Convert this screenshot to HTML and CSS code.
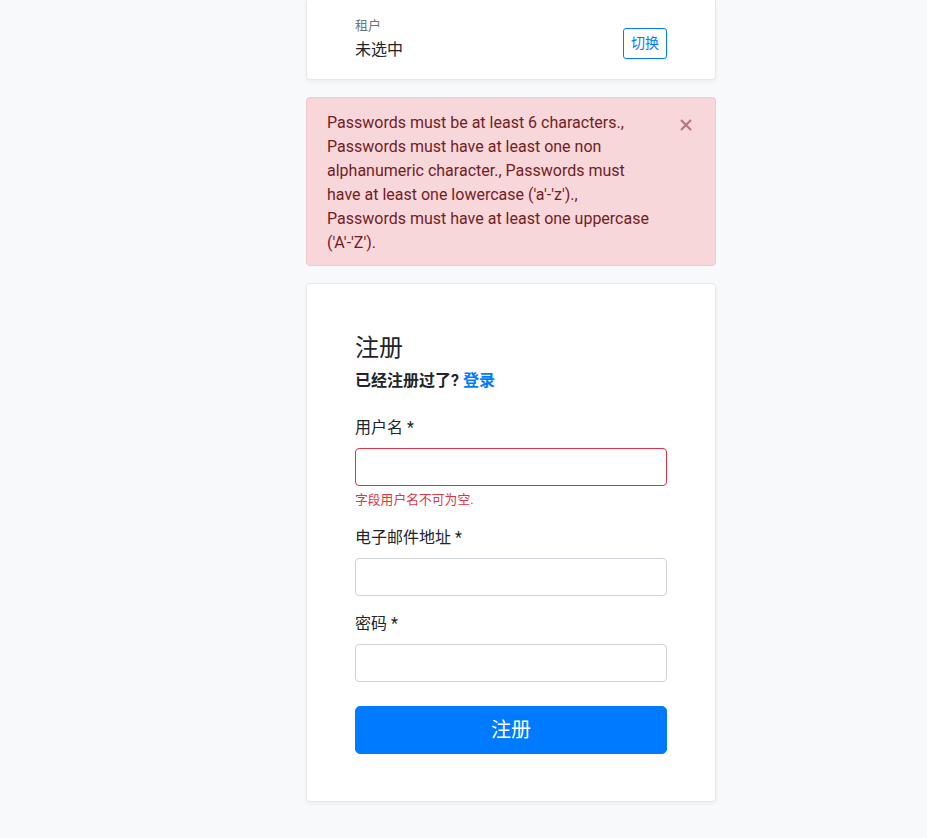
FILE: index.html
```html
<!DOCTYPE html>
<html lang="zh">
<head>
<meta charset="utf-8">
<title>注册</title>
<link rel="stylesheet" href="styles.css">
</head>
<body>
<main class="column">
  <section class="card tenant-card">
    <div class="tenant-info">
      <div class="tenant-label">租户</div>
      <div class="tenant-value">未选中</div>
    </div>
    <button class="btn-outline">切换</button>
  </section>

  <div class="alert">
    <p class="alert-text">Passwords must be at least 6 characters., Passwords must have at least one non alphanumeric character., Passwords must have at least one lowercase ('a'-'z')., Passwords must have at least one uppercase ('A'-'Z').</p>
    <button class="close" aria-label="Close">
      <svg width="12" height="12" viewBox="0 0 12 12"><path d="M1 1L11 11M11 1L1 11" stroke="currentColor" stroke-width="2.2" stroke-linecap="butt"/></svg>
    </button>
  </div>

  <section class="card register-card">
    <h4 class="title">注册</h4>
    <p class="subtitle">已经注册过了? <a href="#" class="link">登录</a></p>
    <form class="form">
      <div class="group">
        <label class="label">用户名 *</label>
        <input class="input invalid" type="text">
        <div class="feedback">字段用户名不可为空.</div>
      </div>
      <div class="group">
        <label class="label">电子邮件地址 *</label>
        <input class="input" type="email">
      </div>
      <div class="group">
        <label class="label">密码 *</label>
        <input class="input" type="password">
      </div>
      <button class="btn-primary" type="button">注册</button>
    </form>
  </section>
</main>
</body>
</html>
```

FILE: styles.css
```css
* { box-sizing: border-box; }
html, body { margin: 0; padding: 0; }
body {
  background: #f8f9fa;
  font-family: "Segoe UI", Roboto, "Noto Sans CJK SC", sans-serif;
  font-size: 16px;
  line-height: 1.5;
  color: #212529;
  height: 838px;
  overflow: hidden;
}
.column {
  width: 410px;
  margin-left: 306px;
  display: flex;
  flex-direction: column;
  gap: 17px;
}
.card {
  background: #fff;
  border: 1px solid rgba(0,0,0,.09);
  border-radius: 4px;
  box-shadow: 0 2px 4px rgba(0,0,0,.05);
}
.tenant-card {
  border-top: 0;
  border-radius: 0 0 4px 4px;
  padding: 16px 48px 17px;
  display: flex;
  justify-content: space-between;
  align-items: flex-end;
}
.tenant-label {
  font-size: 13px;
  line-height: 20px;
  color: #6c757d;
  margin-bottom: 2px;
}
.tenant-value {
  font-size: 16px;
  line-height: 24px;
}
.btn-outline {
  font-family: inherit;
  font-size: 14px;
  line-height: 21px;
  padding: 4px 7px;
  color: #007bff;
  background: #fff;
  border: 1px solid #007bff;
  border-radius: 3px;
  margin-bottom: 3px;
}
.alert {
  position: relative;
  background: #f8d7da;
  border: 1px solid #f5c6cb;
  color: #721c24;
  border-radius: 4px;
  padding: 13px 64px 10px 20px;
}
.alert-text { margin: 0; }
.close {
  position: absolute;
  top: 21px;
  right: 23px;
  padding: 0;
  border: 0;
  background: none;
  color: #721c24;
  opacity: .5;
  line-height: 0;
}
.register-card {
  padding: 50px 48px 47px;
}
.title {
  font-size: 24px;
  font-weight: 400;
  line-height: 1.2;
  margin: 0 0 6px;
}
.subtitle {
  font-weight: 700;
  margin: 0 0 23px;
}
.link {
  color: #007bff;
  text-decoration: none;
}
.form { display: flex; flex-direction: column; }
.group {
  display: flex;
  flex-direction: column;
  margin-bottom: 16px;
}
.group:last-of-type { margin-bottom: 24px; }
.label {
  line-height: 24px;
  margin-bottom: 8px;
}
.input {
  height: 38px;
  width: 100%;
  border: 1px solid #ced4da;
  border-radius: 4px;
  background: #fff;
  font-family: inherit;
  font-size: 16px;
  padding: 6px 12px;
}
.input.invalid { border-color: #dc3545; }
.feedback {
  font-size: 12.8px;
  line-height: 19px;
  margin-top: 4px;
  color: #dc3545;
  margin-bottom: 1px;
}
.btn-primary {
  height: 48px;
  width: 100%;
  background: #007bff;
  color: #fff;
  border: 1px solid #007bff;
  border-radius: 5px;
  font-family: inherit;
  font-size: 20px;
  line-height: 30px;
}
```
